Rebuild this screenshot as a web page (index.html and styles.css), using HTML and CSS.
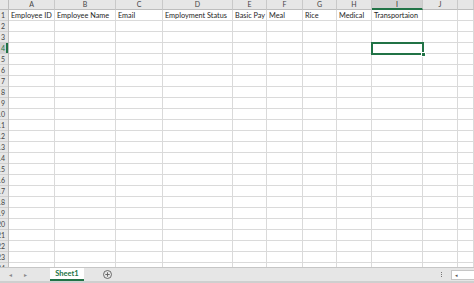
FILE: index.html
```html
<!DOCTYPE html>
<html lang="en">
<head>
	<meta charset="UTF-8">
	<title>Book1 - Excel</title>
	<link rel="stylesheet" href="styles.css">
</head>
<body>
	<div class="book">
		<div class="sheet">
			<!-- row numbers -->
			<div class="col rowhead">
				<div class="corner"></div>
				<div class="num">1</div>
				<div class="num">2</div>
				<div class="num">3</div>
				<div class="num on">4</div>
				<div class="num">5</div>
				<div class="num">6</div>
				<div class="num">7</div>
				<div class="num">8</div>
				<div class="num">9</div>
				<div class="num">10</div>
				<div class="num">11</div>
				<div class="num">12</div>
				<div class="num">13</div>
				<div class="num">14</div>
				<div class="num">15</div>
				<div class="num">16</div>
				<div class="num">17</div>
				<div class="num">18</div>
				<div class="num">19</div>
				<div class="num">20</div>
				<div class="num">21</div>
				<div class="num">22</div>
				<div class="num">23</div>
				<div class="num">24</div>
			</div>
			<div class="col">
				<div class="head">A</div>
				<div class="body"><div class="cell">Employee ID</div></div>
			</div>
			<div class="col">
				<div class="head">B</div>
				<div class="body"><div class="cell">Employee Name</div></div>
			</div>
			<div class="col">
				<div class="head">C</div>
				<div class="body"><div class="cell">Email</div></div>
			</div>
			<div class="col">
				<div class="head">D</div>
				<div class="body"><div class="cell">Employment Status</div></div>
			</div>
			<div class="col">
				<div class="head">E</div>
				<div class="body"><div class="cell">Basic Pay</div></div>
			</div>
			<div class="col">
				<div class="head">F</div>
				<div class="body"><div class="cell">Meal</div></div>
			</div>
			<div class="col">
				<div class="head">G</div>
				<div class="body"><div class="cell">Rice</div></div>
			</div>
			<div class="col">
				<div class="head">H</div>
				<div class="body"><div class="cell">Medical</div></div>
			</div>
			<div class="col">
				<div class="head on">I</div>
				<div class="body">
					<div class="cell">Transportaion</div>
					<div class="cell"></div>
					<div class="cell"></div>
					<!-- active cell -->
					<div class="cell sel"></div>
				</div>
			</div>
			<div class="col">
				<div class="head">J</div>
				<div class="body"></div>
			</div>
			<div class="col">
				<div class="head"></div>
				<div class="body"></div>
			</div>
		</div>
		<!-- sheet tabs -->
		<div class="tabs">
			<div class="nav"><span>&#9666;</span><span>&#9656;</span></div>
			<div class="tab">Sheet1</div>
			<div class="add">
				<svg width="9" height="9" viewBox="0 0 9 9">
					<circle cx="4.5" cy="4.5" r="4" fill="none" stroke="#5f5f5f" stroke-width="0.9"/>
					<path d="M4.5 2.3v4.4M2.3 4.5h4.4" stroke="#5f5f5f" stroke-width="0.9"/>
				</svg>
			</div>
			<div class="space"></div>
			<div class="grip"><i></i><i></i><i></i></div>
			<div class="hscroll"><span>&#9666;</span></div>
		</div>
	</div>
</body>
</html>
```

FILE: styles.css
```css
html,
body{
	margin: 0;
	padding: 0;
	background: #fff;
}
.book{
	width: 474px;
	height: 283px;
	display: flex;
	flex-direction: column;
	overflow: hidden;
	font-family: Lato, "Liberation Sans", sans-serif;
}
.sheet{
	flex: 1;
	min-height: 0;
	display: grid;
	grid-template-columns: 9px 46px 61px 47px 70px 34px 36px 34px 35px 51px 35px 16px;
	overflow: hidden;
}
.col{
	display: flex;
	flex-direction: column;
	min-width: 0;
}
.head{
	height: 10px;
	flex: none;
	box-sizing: border-box;
	background: #e6e6e6;
	border-right: 1px solid #c9c9c9;
	border-bottom: 1px solid #bdbdbd;
	font-size: 7px;
	line-height: 9px;
	text-align: center;
	color: #444;
}
.head.on{
	background: #d2d2d2;
	border-bottom: 2px solid #217346;
	line-height: 8px;
	color: #262626;
}
.body{
	flex: 1;
	border-right: 1px solid #dadada;
	background: repeating-linear-gradient(#fff 0 10px, #dadada 10px 11px);
}
.cell{
	height: 11px;
	padding-left: 2px;
	font-size: 7.3px;
	line-height: 11px;
	white-space: nowrap;
	color: #1e1e1e;
}
.sel{
	position: relative;
}
.sel::before{
	content: "";
	position: absolute;
	top: -1px;
	left: -1px;
	right: -2px;
	bottom: -1px;
	border: 2px solid #217346;
}
.sel::after{
	content: "";
	position: absolute;
	right: -4px;
	bottom: -3px;
	width: 3px;
	height: 3px;
	background: #217346;
	border: 1px solid #fff;
}
.rowhead{
	background: #e6e6e6;
	border-right: 1px solid #bdbdbd;
}
.corner{
	height: 10px;
	flex: none;
	box-sizing: border-box;
	border-bottom: 1px solid #bdbdbd;
}
.num{
	height: 11px;
	flex: none;
	box-sizing: border-box;
	display: flex;
	justify-content: flex-end;
	padding-right: 3px;
	border-bottom: 1px solid #d0d0d0;
	font-size: 7px;
	line-height: 10px;
	color: #444;
}
.num.on{
	background: #d2d2d2;
	color: #217346;
	box-shadow: inset -2px 0 0 #217346;
}
.tabs{
	height: 16px;
	flex: none;
	box-sizing: border-box;
	display: flex;
	align-items: stretch;
	background: #e6e6e6;
	border-top: 1px solid #c6c6c6;
	border-bottom: 2px solid #cfcfcf;
}
.nav{
	width: 50px;
	display: flex;
	align-items: center;
	gap: 12px;
	padding-left: 9px;
	box-sizing: border-box;
	font-size: 6px;
	color: #8a8a8a;
}
.tab{
	width: 34px;
	box-sizing: border-box;
	background: #fff;
	border-bottom: 2px solid #217346;
	text-align: center;
	font-size: 7.5px;
	font-weight: bold;
	line-height: 12px;
	color: #217346;
}
.add{
	margin-left: 19px;
	display: flex;
	align-items: center;
}
.space{
	flex: 1;
}
.grip{
	width: 2px;
	display: flex;
	flex-direction: column;
	justify-content: center;
	gap: 1px;
	margin-right: 8px;
}
.grip i{
	width: 1px;
	height: 1px;
	background: #777;
}
.hscroll{
	width: 23px;
	height: 10px;
	align-self: center;
	box-sizing: border-box;
	background: #fff;
	border: 1px solid #c6c6c6;
	border-right: 0;
	font-size: 5px;
	line-height: 8px;
	padding-left: 3px;
	color: #555;
}
```
